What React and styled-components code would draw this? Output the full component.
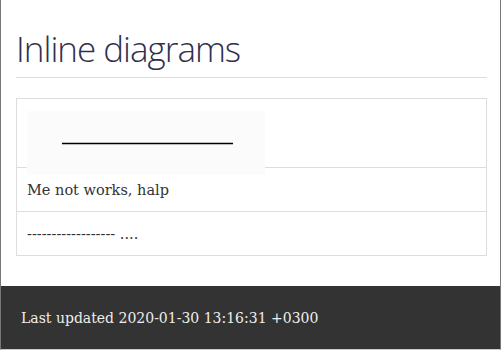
import React from 'react'
import styled, { createGlobalStyle } from 'styled-components'

const GlobalStyle = createGlobalStyle`
  html, body {
    margin: 0;
    padding: 0;
    background: #fff;
  }
`

const Page = styled.div`
  width: 499px;
  height: 349px;
  border-left: 1px solid #777;
  border-right: 1px solid #777;
  border-bottom: 1px solid #ccc;
  display: flex;
  flex-direction: column;
  background: #fff;
  font-family: "DejaVu Serif", "Liberation Serif", serif;
  color: #333;
`

const Main = styled.main`
  flex: 1;
  padding: 0 13px 0 15px;
`

const Title = styled.h1`
  margin: 27px 0 20px;
  padding-bottom: 7px;
  border-bottom: 1px solid #ddd;
  font-family: "Open Sans", sans-serif;
  font-weight: 300;
  font-size: 35px;
  letter-spacing: -1px;
  line-height: 43px;
  color: #2f2f4f;
`

const Table = styled.div`
  border: 1px solid #ddd;
  display: flex;
  flex-direction: column;
`

const Row = styled.div`
  height: ${p => p.$h}px;
  box-sizing: border-box;
  padding: 0 10px;
  display: flex;
  align-items: center;
  font-size: 14.5px;
  & + & {
    border-top: 1px solid #ddd;
  }
`

const DiagramRow = styled(Row)`
  align-items: flex-start;
  padding-top: 12px;
`

const Diagram = styled.div`
  position: relative;
  z-index: 1;
  width: 238px;
  height: 64px;
  background: #fbfbfb;
  flex-shrink: 0;

  svg {
    display: block;
  }
`

const Footer = styled.footer`
  height: 63px;
  background: #333;
  color: #eee;
  display: flex;
  align-items: center;
  padding: 0 20px;
  font-family: "DejaVu Serif", "Liberation Serif", serif;
  font-size: 14px;
`

export default function App() {
  return (
    <>
      <GlobalStyle />
      <Page>
        <Main>
          <Title>Inline diagrams</Title>
          <Table>
            <DiagramRow $h={68}>
              <Diagram>
                <svg width="238" height="64" viewBox="0 0 238 64">
                  <line x1="35" y1="32.5" x2="206" y2="32.5" stroke="#000" strokeWidth="1.5" />
                </svg>
              </Diagram>
            </DiagramRow>
            <Row $h={44}>Me not works, halp</Row>
            <Row $h={44}>------------------ ....</Row>
          </Table>
        </Main>
        <Footer>Last updated 2020-01-30 13:16:31 +0300</Footer>
      </Page>
    </>
  )
}
